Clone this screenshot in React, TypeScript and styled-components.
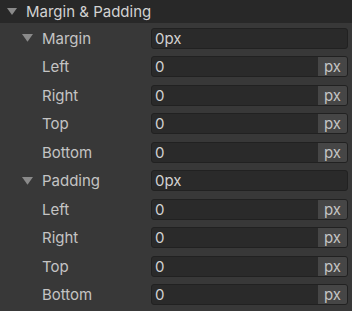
import React from 'react';
import styled, { createGlobalStyle } from 'styled-components';

const GlobalStyle = createGlobalStyle`
  html, body {
    margin: 0;
    padding: 0;
    background: #383838;
  }
  body {
    font-family: Inter, "Noto Sans", sans-serif;
  }
`;

const Panel = styled.div`
  width: 352px;
  height: 311px;
  background: #383838;
  overflow: hidden;
`;

const Header = styled.div`
  height: 22.5px;
  display: flex;
  align-items: center;
  background: #282828;
  padding-left: 7px;
  gap: 9px;
  color: #d2d2d2;
  font-size: 15px;
`;

const Body = styled.div`
  padding-top: 1.5px;
`;

const Row = styled.div`
  height: 28.5px;
  display: flex;
  align-items: center;
  padding-right: 4px;
`;

const LabelCell = styled.div<{ $indent: number }>`
  width: 151px;
  flex: none;
  display: flex;
  align-items: center;
  gap: 9px;
  padding-left: ${({ $indent }) => $indent}px;
  box-sizing: border-box;
  color: #c4c4c4;
  font-size: 15px;
`;

const Field = styled.div`
  flex: 1;
  height: 21px;
  box-sizing: border-box;
  display: flex;
  align-items: stretch;
  background: #2a2a2a;
  border: 1px solid #212121;
  border-radius: 3px;
  overflow: hidden;
`;

const Value = styled.div`
  flex: 1;
  display: flex;
  align-items: center;
  padding-left: 3px;
  color: #d2d2d2;
  font-size: 15px;
`;

const Unit = styled.div`
  width: 29px;
  display: flex;
  align-items: center;
  justify-content: center;
  background: #464646;
  color: #c4c4c4;
  font-size: 15px;
`;

const Arrow = ({ size = 9 }: { size?: number }) => (
  <svg width={size} height={size * 0.7} viewBox="0 0 10 7">
    <path d="M0 0 H10 L5 7 Z" fill="#8a8a8a" />
  </svg>
);

const sides = ['Left', 'Right', 'Top', 'Bottom'];

function Group({ name }: { name: string }) {
  return (
    <>
      <Row>
        <LabelCell $indent={22}>
          <Arrow size={11} />
          <span>{name}</span>
        </LabelCell>
        <Field>
          <Value>0px</Value>
        </Field>
      </Row>
      {sides.map((s) => (
        <Row key={s}>
          <LabelCell $indent={42}>{s}</LabelCell>
          <Field>
            <Value>0</Value>
            <Unit>px</Unit>
          </Field>
        </Row>
      ))}
    </>
  );
}

export default function App() {
  return (
    <>
      <GlobalStyle />
      <Panel>
        <Header>
          <Arrow size={10} />
          <span>Margin &amp; Padding</span>
        </Header>
        <Body>
          <Group name="Margin" />
          <Group name="Padding" />
        </Body>
      </Panel>
    </>
  );
}
